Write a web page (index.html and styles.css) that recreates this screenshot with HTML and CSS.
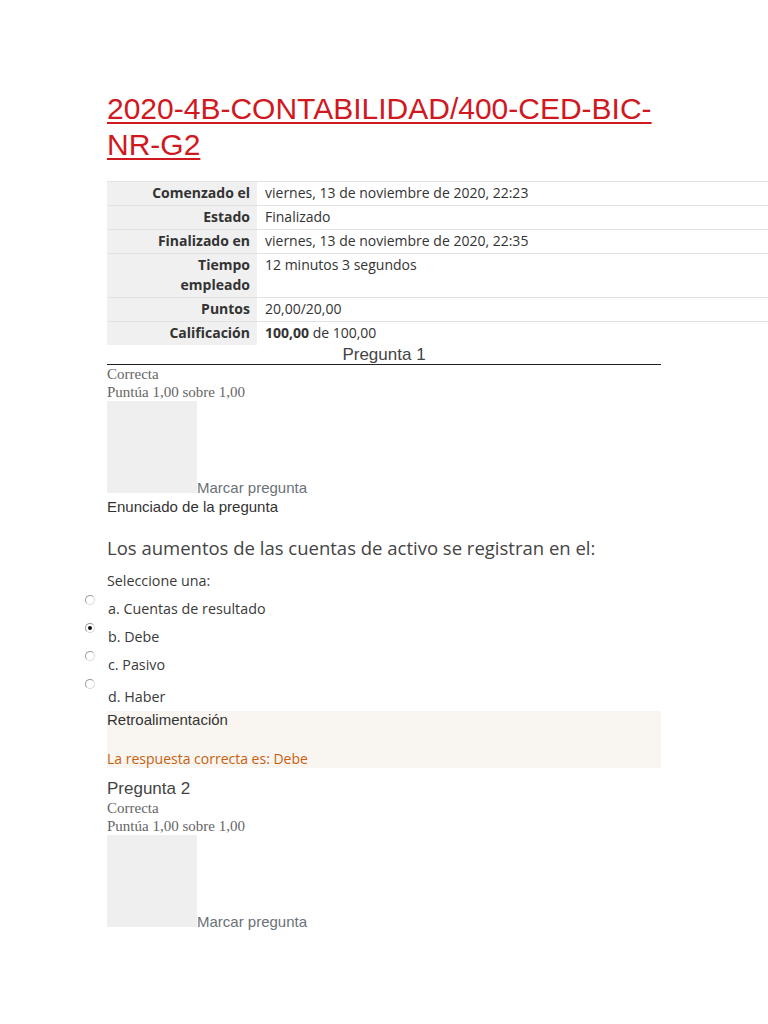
FILE: index.html
```html
<!DOCTYPE html>
<html lang="es">
<head>
<meta charset="utf-8">
<title>Revisión</title>
<link rel="stylesheet" href="styles.css">
</head>
<body>
<div class="page">
  <h1 class="title"><a href="#">2020-4B-CONTABILIDAD/400-CED-BIC-NR-G2</a></h1>

  <table class="summary">
    <tr><th>Comenzado el</th><td>viernes, 13 de noviembre de 2020, 22:23</td></tr>
    <tr><th>Estado</th><td>Finalizado</td></tr>
    <tr><th>Finalizado en</th><td>viernes, 13 de noviembre de 2020, 22:35</td></tr>
    <tr><th>Tiempo empleado</th><td>12 minutos 3 segundos</td></tr>
    <tr><th>Puntos</th><td>20,00/20,00</td></tr>
    <tr><th>Calificación</th><td><b>100,00</b> de 100,00</td></tr>
  </table>

  <div class="content">
    <h3 class="qhead centered">Pregunta 1</h3>
    <div class="state">Correcta</div>
    <div class="state">Puntúa 1,00 sobre 1,00</div>
    <div class="flag"><span class="flagbox"></span>Marcar pregunta</div>
    <div class="enun">Enunciado de la pregunta</div>

    <p class="qtext">Los aumentos de las cuentas de activo se registran en el:</p>
    <div class="prompt">Seleccione una:</div>
    <div class="answers">
      <div class="opt"><span class="radio"></span><span class="lbl">a. Cuentas de resultado</span></div>
      <div class="opt"><span class="radio checked"></span><span class="lbl">b. Debe</span></div>
      <div class="opt"><span class="radio"></span><span class="lbl">c. Pasivo</span></div>
      <div class="opt last"><span class="radio"></span><span class="lbl">d. Haber</span></div>
    </div>

    <div class="feedback">
      <div class="fbtitle">Retroalimentación</div>
      <div class="right">La respuesta correcta es: Debe</div>
    </div>

    <h3 class="qhead">Pregunta 2</h3>
    <div class="state">Correcta</div>
    <div class="state">Puntúa 1,00 sobre 1,00</div>
    <div class="flag"><span class="flagbox"></span>Marcar pregunta</div>
  </div>
</div>
</body>
</html>
```

FILE: styles.css
```css
html, body {
  margin: 0;
  padding: 0;
  background: #ffffff;
  overflow-x: hidden;
}

.page {
  padding: 91px 0 0 107px;
  font-family: "Liberation Sans", Arial, sans-serif;
}

.title {
  margin: 0;
  width: 554px;
  font-family: "Liberation Sans", Arial, sans-serif;
  font-size: 30px;
  line-height: 36px;
  font-weight: normal;
}

.title a {
  color: #d0181f;
  text-decoration: underline;
  text-decoration-thickness: 2px;
  text-underline-offset: 3px;
}

.summary {
  margin-top: 18px;
  width: 700px;
  border-collapse: collapse;
  font-family: "Open Sans", "Segoe UI", sans-serif;
  font-size: 14px;
  line-height: 20px;
  color: #333;
}

.summary tr {
  border-top: 1px solid #dfe3e8;
}

.summary th {
  width: 118px;
  background: #f0f0f0;
  text-align: right;
  font-weight: bold;
  padding: 1px 7px 2px 25px;
  vertical-align: top;
}

.summary td {
  background: #fff;
  text-align: left;
  padding: 1px 8px 2px 8px;
  vertical-align: top;
}

.content {
  width: 554px;
}

.qhead {
  margin: 0;
  font-family: "Liberation Sans", Arial, sans-serif;
  font-size: 17px;
  line-height: 21px;
  font-weight: normal;
  color: #444;
}

.qhead.centered {
  text-align: center;
  line-height: 19px;
  border-bottom: 1px solid #222;
}

.state {
  font-family: "Liberation Serif", "Times New Roman", serif;
  font-size: 15px;
  line-height: 18px;
  color: #666;
}

.flag {
  font-family: "Liberation Sans", Arial, sans-serif;
  font-size: 15px;
  line-height: 18px;
  color: #6b7178;
}

.flagbox {
  display: inline-block;
  width: 90px;
  height: 92px;
  background: #efefef;
  vertical-align: baseline;
}

.enun {
  font-size: 15px;
  line-height: 20px;
  color: #333;
}

.qtext {
  margin: 18px 0 0;
  font-family: "Open Sans", "Segoe UI", sans-serif;
  font-size: 18.5px;
  line-height: 26px;
  color: #444;
}

.prompt {
  margin-top: 10px;
  font-family: "Open Sans", "Segoe UI", sans-serif;
  font-size: 14.3px;
  line-height: 20px;
  color: #3a3a3a;
}

.answers {
  margin-left: -22px;
}

.opt {
  display: flex;
  align-items: flex-start;
  height: 28px;
}

.opt.last {
  height: 36px;
}

.radio {
  flex: none;
  width: 8px;
  height: 8px;
  margin: 4px 12px 0 0;
  border-radius: 50%;
  border: 1px solid #9a9a9a;
  border-right-color: #d8d8d8;
  border-bottom-color: #d8d8d8;
  background: #fff;
  position: relative;
}

.radio.checked::after {
  content: "";
  position: absolute;
  left: 2px;
  top: 2px;
  width: 4px;
  height: 4px;
  border-radius: 50%;
  background: #111;
}

.lbl {
  margin-top: 8px;
  margin-left: 1px;
  font-family: "Open Sans", "Segoe UI", sans-serif;
  font-size: 14.3px;
  line-height: 20px;
  color: #3a3a3a;
}

.opt.last .lbl {
  margin-top: 12px;
}

.feedback {
  background: #f9f6f2;
  padding: 0;
}

.fbtitle {
  font-size: 15px;
  line-height: 18px;
  color: #333;
  padding-bottom: 20px;
}

.right {
  font-family: "Open Sans", "Segoe UI", sans-serif;
  font-size: 14px;
  line-height: 19px;
  color: #c8600e;
}

.feedback + .qhead {
  margin-top: 10px;
}
```
